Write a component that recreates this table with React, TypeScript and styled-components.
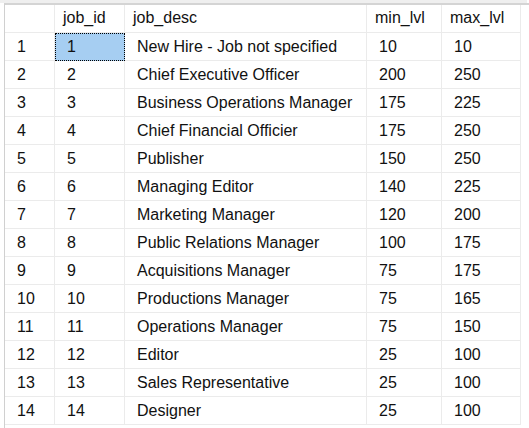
import React from "react";
import styled, { createGlobalStyle } from "styled-components";

const Global = createGlobalStyle`
  html, body { margin: 0; padding: 0; background: #ffffff; }
  body { font-family: "Liberation Sans", Arial, sans-serif; }
`;

const Page = styled.div`
  width: 529px;
  height: 428px;
  background: #ffffff;
  display: flex;
  flex-direction: column;
`;

const TopStrip = styled.div`
  height: 3px;
  width: 527px;
  background: #efefef;
`;

const Frame = styled.div`
  margin-left: 4px;
  border-top: 2px solid #d4d4d4;
  border-left: 1px solid #d0d0d0;
  flex: 1;
  display: flex;
  align-items: flex-start;
`;

const Grid = styled.div`
  display: grid;
  grid-template-columns: 50px 70px 242px 75px 79px;
  grid-auto-rows: 28px;
`;

const BaseCell = styled.div`
  box-sizing: border-box;
  border-right: 1px solid #ebebeb;
  border-bottom: 1px solid #ebebeb;
  display: flex;
  align-items: center;
  font-size: 16px;
  color: #111111;
  white-space: nowrap;
  overflow: hidden;
`;

const HeaderCell = styled(BaseCell)`
  padding-left: 8px;
  padding-bottom: 2px;
`;

const RowHeader = styled(BaseCell)`
  padding-left: 12px;
  padding-top: 1px;
`;

const Cell = styled(BaseCell)<{ $selected?: boolean }>`
  padding-left: ${(p) => (p.$selected ? "11px" : "12px")};
  padding-top: ${(p) => (p.$selected ? "0px" : "1px")};
  background: ${(p) => (p.$selected ? "#a6cef2" : "transparent")};
  border: ${(p) => (p.$selected ? "1px dotted #000000" : "none")};
  border-right: ${(p) => (p.$selected ? "1px dotted #000000" : "1px solid #ebebeb")};
  border-bottom: ${(p) => (p.$selected ? "1px dotted #000000" : "1px solid #ebebeb")};
`;

const rows: [number, string, number, number][] = [
  [1, "New Hire - Job not specified", 10, 10],
  [2, "Chief Executive Officer", 200, 250],
  [3, "Business Operations Manager", 175, 225],
  [4, "Chief Financial Officier", 175, 250],
  [5, "Publisher", 150, 250],
  [6, "Managing Editor", 140, 225],
  [7, "Marketing Manager", 120, 200],
  [8, "Public Relations Manager", 100, 175],
  [9, "Acquisitions Manager", 75, 175],
  [10, "Productions Manager", 75, 165],
  [11, "Operations Manager", 75, 150],
  [12, "Editor", 25, 100],
  [13, "Sales Representative", 25, 100],
  [14, "Designer", 25, 100],
];

export default function App() {
  return (
    <Page>
      <Global />
      <TopStrip />
      <Frame>
        <Grid>
          <HeaderCell />
          <HeaderCell>job_id</HeaderCell>
          <HeaderCell>job_desc</HeaderCell>
          <HeaderCell>min_lvl</HeaderCell>
          <HeaderCell>max_lvl</HeaderCell>
          {rows.map(([id, desc, min, max], i) => (
            <React.Fragment key={id}>
              <RowHeader>{i + 1}</RowHeader>
              <Cell $selected={i === 0}>{id}</Cell>
              <Cell>{desc}</Cell>
              <Cell>{min}</Cell>
              <Cell>{max}</Cell>
            </React.Fragment>
          ))}
        </Grid>
      </Frame>
    </Page>
  );
}
